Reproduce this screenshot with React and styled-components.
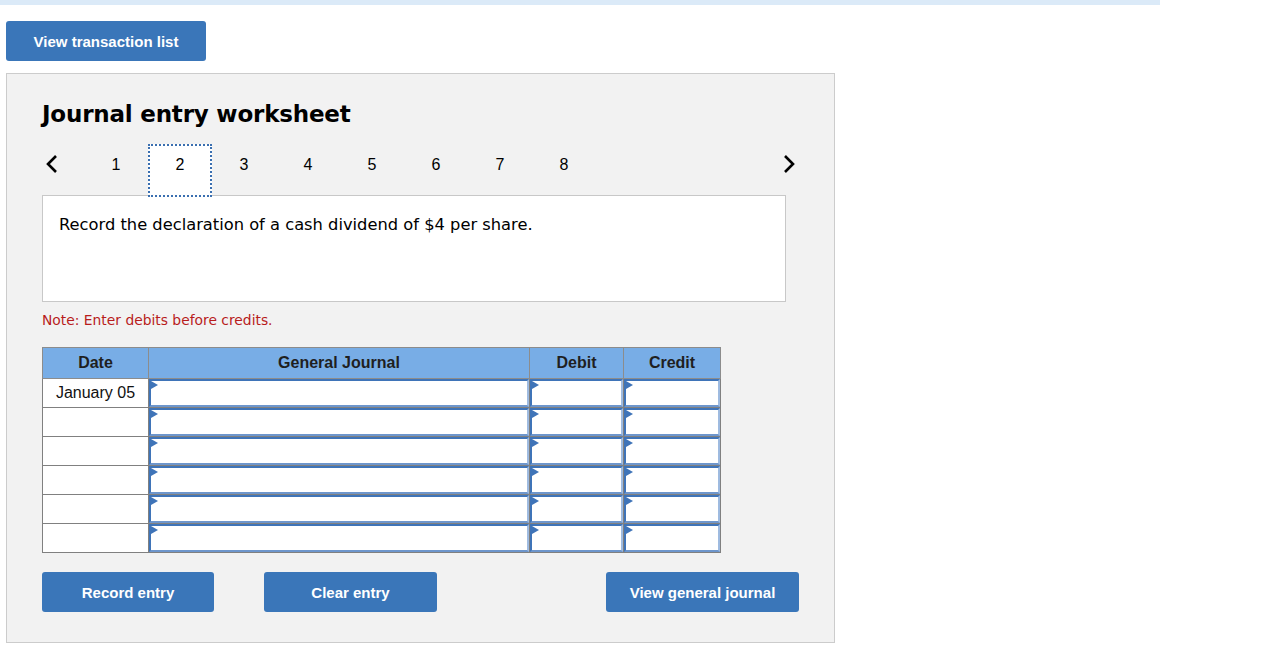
import styled, { createGlobalStyle } from "styled-components";

const GlobalStyle = createGlobalStyle`
  body {
    margin: 0;
    background: #ffffff;
    font-family: "Liberation Sans", Arial, sans-serif;
  }
`;

const Page = styled.div`
  width: 1285px;
  height: 647px;
  overflow: hidden;
`;

const TopBar = styled.div`
  width: 1160px;
  height: 5px;
  background: #dbeaf8;
`;

const Button = styled.button`
  background: #3a76b9;
  color: #ffffff;
  border: none;
  border-radius: 3px;
  height: 40px;
  width: ${(p) => p.$w}px;
  font-family: "Liberation Sans", Arial, sans-serif;
  font-weight: bold;
  font-size: 15px;
  cursor: pointer;
  padding: 0;
`;

const TopButtonRow = styled.div`
  padding: 16px 0 0 6px;
`;

const Panel = styled.div`
  margin: 12px 0 0 6px;
  width: 829px;
  height: 570px;
  background: #f2f2f2;
  border: 1px solid #cccccc;
  padding: 0 0 0 35px;
  box-sizing: border-box;
`;

const Title = styled.h1`
  margin: 0;
  padding-top: 27px;
  font-family: "DejaVu Sans", Verdana, sans-serif;
  font-size: 23px;
  font-weight: bold;
  color: #000000;
  letter-spacing: -0.2px;
`;

const Nav = styled.div`
  display: flex;
  align-items: flex-start;
  height: 53px;
  margin-top: 17px;
  width: 757px;
`;

const Arrow = styled.div`
  width: 20px;
  height: 40px;
  display: flex;
  justify-content: center;
  align-items: center;
`;

const Tabs = styled.div`
  display: flex;
  margin-left: 22px;
  flex: 1;
`;

const Tab = styled.div`
  width: 64px;
  height: 53px;
  box-sizing: border-box;
  display: flex;
  justify-content: center;
  align-items: flex-start;
  padding-top: 10px;
  font-size: 16px;
  color: #000000;
  font-family: "Liberation Sans", Arial, sans-serif;
  background: ${(p) => (p.$active ? "#ffffff" : "transparent")};
  border: 2px dotted ${(p) => (p.$active ? "#3a6fb0" : "transparent")};
  position: relative;
  z-index: 1;
`;

const Prompt = styled.div`
  margin-top: -2px;
  width: 744px;
  height: 107px;
  box-sizing: border-box;
  background: #ffffff;
  border: 1px solid #c8c8c8;
  padding: 19px 16px;
  font-family: "DejaVu Sans", Verdana, sans-serif;
  font-size: 16.3px;
  color: #000000;
`;

const Note = styled.div`
  margin-top: 10px;
  font-family: "DejaVu Sans", Verdana, sans-serif;
  font-size: 13.85px;
  color: #b81c1c;
`;

const Table = styled.table`
  margin-top: 19px;
  border-collapse: collapse;
  font-family: "Liberation Sans", Arial, sans-serif;
  font-size: 16px;
`;

const Th = styled.th`
  background: #78ade6;
  height: 30px;
  padding: 0;
  width: ${(p) => p.$w}px;
  font-weight: bold;
  color: #1f1f1f;
  border-top: 1px solid #8c8c8c;
  border-bottom: 1px solid #8c8c8c;
  border-left: 1px solid ${(p) => (p.$first ? "#8c8c8c" : "#2a2a2a")};
  border-right: 1px solid #8c8c8c;
`;

const Td = styled.td`
  height: 28px;
  padding: 0;
  background: #ffffff;
  border: 1px solid #808080;
  text-align: center;
  color: #111111;
`;

const InputTd = styled(Td)`
  padding: 0;
`;

const Field = styled.div`
  position: relative;
  height: 28px;
  box-sizing: border-box;
  border-top: 2px solid #3f74b8;
  border-left: 2px solid #3f74b8;
  border-right: 2px solid #9fbbe0;
  border-bottom: 2px solid #6e96cc;
  background: #ffffff;

  &::before {
    content: "";
    position: absolute;
    top: 0;
    left: 0;
    border-top: 4px solid transparent;
    border-bottom: 4px solid transparent;
    border-left: 7px solid #3f74b8;
  }
`;

const Actions = styled.div`
  display: flex;
  margin-top: 19px;
  width: 757px;
`;

const Gap = styled.div`
  flex: ${(p) => (p.$w ? `0 0 ${p.$w}px` : "1")};
`;

const ChevronLeft = () => (
  <svg width="14" height="20" viewBox="0 0 14 20">
    <path d="M11 2 L3 10 L11 18" fill="none" stroke="#000" strokeWidth="2.6" />
  </svg>
);

const ChevronRight = () => (
  <svg width="14" height="20" viewBox="0 0 14 20">
    <path d="M3 2 L11 10 L3 18" fill="none" stroke="#000" strokeWidth="2.6" />
  </svg>
);

const rows = ["January 05", "", "", "", "", ""];

export default function App() {
  return (
    <Page>
      <GlobalStyle />
      <TopBar />
      <TopButtonRow>
        <Button $w={200}>View transaction list</Button>
      </TopButtonRow>
      <Panel>
        <Title>Journal entry worksheet</Title>
        <Nav>
          <Arrow>
            <ChevronLeft />
          </Arrow>
          <Tabs>
            {[1, 2, 3, 4, 5, 6, 7, 8].map((n) => (
              <Tab key={n} $active={n === 2}>
                {n}
              </Tab>
            ))}
          </Tabs>
          <Arrow>
            <ChevronRight />
          </Arrow>
        </Nav>
        <Prompt>Record the declaration of a cash dividend of $4 per share.</Prompt>
        <Note>Note: Enter debits before credits.</Note>
        <Table>
          <thead>
            <tr>
              <Th $w={105} $first>Date</Th>
              <Th $w={380}>General Journal</Th>
              <Th $w={93}>Debit</Th>
              <Th $w={96}>Credit</Th>
            </tr>
          </thead>
          <tbody>
            {rows.map((d, i) => (
              <tr key={i}>
                <Td>{d}</Td>
                <InputTd>
                  <Field />
                </InputTd>
                <InputTd>
                  <Field />
                </InputTd>
                <InputTd>
                  <Field />
                </InputTd>
              </tr>
            ))}
          </tbody>
        </Table>
        <Actions>
          <Button $w={172}>Record entry</Button>
          <Gap $w={50} />
          <Button $w={173}>Clear entry</Button>
          <Gap />
          <Button $w={193}>View general journal</Button>
        </Actions>
      </Panel>
    </Page>
  );
}
